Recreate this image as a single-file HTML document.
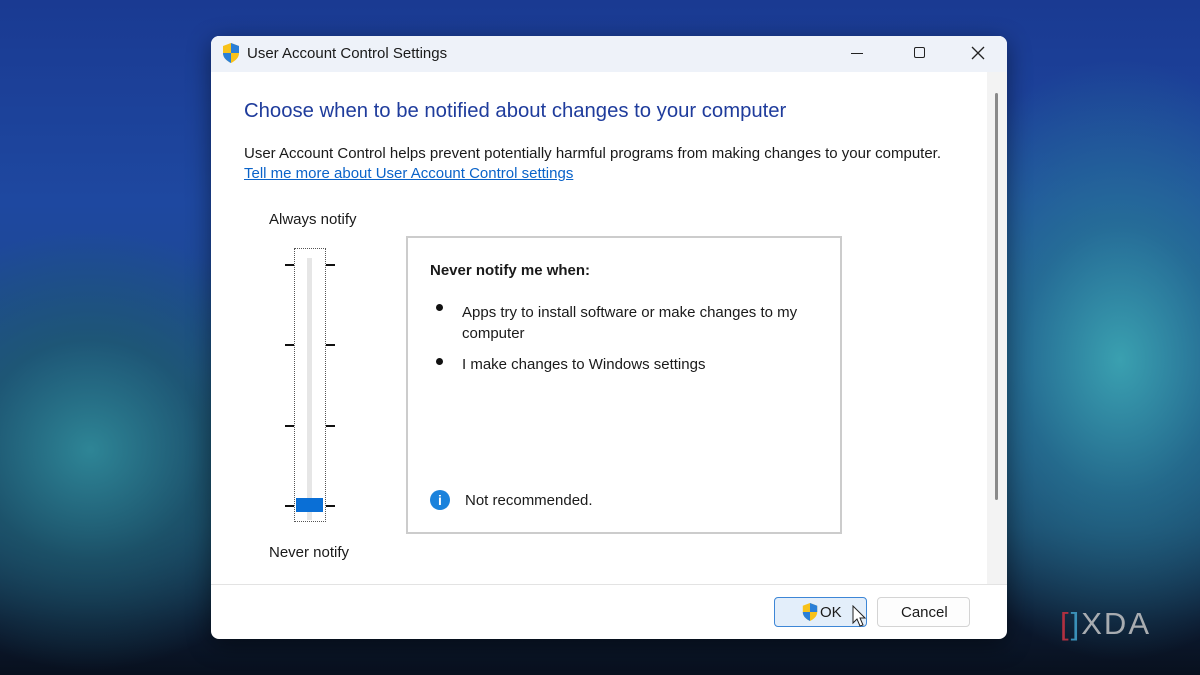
<!DOCTYPE html>
<html><head><meta charset="utf-8"><style>
*{margin:0;padding:0;box-sizing:border-box}
body{width:1200px;height:675px;overflow:hidden;position:relative;font-family:"Liberation Sans",sans-serif;
background:
radial-gradient(ellipse 220px 300px at 1120px 360px,#3aa0b0 0%,rgba(40,120,150,.75) 45%,rgba(0,0,0,0) 100%),
radial-gradient(ellipse 230px 220px at 90px 450px,#2e8596 0%,rgba(30,90,110,.75) 50%,rgba(0,0,0,0) 100%),
linear-gradient(180deg,#1a3a92 0%,#1e48a0 30%,#1d4a8c 55%,#163a5e 78%,#0c1a30 92%,#08101e 100%);}
.a{position:absolute}
.win{left:211px;top:36px;width:796px;height:603px;background:#fff;border-radius:8px;overflow:hidden;box-shadow:0 6px 24px rgba(0,0,0,.45)}
.tb{left:0;top:0;width:796px;height:36px;background:#eef2f9}
.t{font-size:15px;color:#1a1a1a;white-space:nowrap}
</style></head><body>
<div class="a win">
 <div class="a tb"></div>
 <svg class="a" style="left:10px;top:6px" width="20" height="22" viewBox="0 0 20 22"><path d="M10 1 L18 4 V11 C18 16 14 19 10 21 C6 19 2 16 2 11 V4 Z" fill="#f8c21a"/><path d="M10 1 L18 4 V11 H10 Z" fill="#2a7fd8"/><path d="M2 11 H10 V21 C6 19 2 16 2 11Z" fill="#2a7fd8"/></svg>
 <div class="a t" style="left:36px;top:9px">User Account Control Settings</div>
 <div class="a" style="left:640px;top:17px;width:12px;height:1px;background:#222"></div>
 <div class="a" style="left:703px;top:11px;width:11px;height:11px;border:1.5px solid #222;border-radius:2px"></div>
 <svg class="a" style="left:760px;top:10px" width="14" height="14"><path d="M1 1L13 13M13 1L1 13" stroke="#222" stroke-width="1.3"/></svg>
 <div class="a" style="left:776px;top:36px;width:20px;height:512px;background:#f3f3f3"></div>
 <div class="a" style="left:784px;top:57px;width:3px;height:407px;background:#8a8a8a;border-radius:2px"></div>
 <div class="a" style="left:33px;top:64px;font-size:20.3px;color:#1f3c9c;white-space:nowrap">Choose when to be notified about changes to your computer</div>
 <div class="a t" style="left:33px;top:109px">User Account Control helps prevent potentially harmful programs from making changes to your computer.</div>
 <div class="a t" style="left:33px;top:129px;color:#0a63c9;text-decoration:underline">Tell me more about User Account Control settings</div>
 <div class="a t" style="left:58px;top:175px">Always notify</div>
 <div class="a t" style="left:58px;top:508px">Never notify</div>
 <div class="a" style="left:83px;top:212px;width:32px;height:274px;border:1px dotted #555"></div>
 <div class="a" style="left:96px;top:222px;width:5px;height:262px;background:#e6e6e6"></div>
 <div class="a" style="left:74px;top:228px;width:9px;height:2px;background:#111"></div><div class="a" style="left:115px;top:228px;width:9px;height:2px;background:#111"></div>
 <div class="a" style="left:74px;top:308px;width:9px;height:2px;background:#111"></div><div class="a" style="left:115px;top:308px;width:9px;height:2px;background:#111"></div>
 <div class="a" style="left:74px;top:389px;width:9px;height:2px;background:#111"></div><div class="a" style="left:115px;top:389px;width:9px;height:2px;background:#111"></div>
 <div class="a" style="left:74px;top:469px;width:9px;height:2px;background:#111"></div><div class="a" style="left:115px;top:469px;width:9px;height:2px;background:#111"></div>
 <div class="a" style="left:85px;top:462px;width:27px;height:14px;background:#0a6fd6"></div>
 <div class="a" style="left:195px;top:200px;width:436px;height:298px;border:2px solid #cccccc"></div>
 <div class="a t" style="left:219px;top:226px;font-weight:bold">Never notify me when:</div>
 <div class="a" style="left:225px;top:268px;width:7px;height:7px;border-radius:50%;background:#111"></div>
 <div class="a t" style="left:251px;top:266px;line-height:21px">Apps try to install software or make changes to my<br>computer</div>
 <div class="a" style="left:225px;top:322px;width:7px;height:7px;border-radius:50%;background:#111"></div>
 <div class="a t" style="left:251px;top:320px">I make changes to Windows settings</div>
 <div class="a" style="left:219px;top:454px;width:20px;height:20px;border-radius:50%;background:#1a82dc;color:#fff;font-size:14px;text-align:center;line-height:20px;font-weight:bold">i</div>
 <div class="a t" style="left:254px;top:456px">Not recommended.</div>
 <div class="a" style="left:0;top:548px;width:796px;height:1px;background:#e3e3e3"></div>
 <div class="a" style="left:563px;top:561px;width:93px;height:30px;border:1px solid #3d86d6;background:#e3eefa;border-radius:4px"></div>
 <svg class="a" style="left:590px;top:566px" width="18" height="20" viewBox="0 0 20 22"><path d="M10 1 L18 4 V11 C18 16 14 19 10 21 C6 19 2 16 2 11 V4 Z" fill="#f8c21a"/><path d="M10 1 L18 4 V11 H10 Z" fill="#2a7fd8"/><path d="M2 11 H10 V21 C6 19 2 16 2 11Z" fill="#2a7fd8"/></svg>
 <div class="a t" style="left:609px;top:568px">OK</div>
 <svg class="a" style="left:641px;top:569px" width="16" height="24"><path d="M1 1 V18 L5 14 L8 21 L11 20 L8 13 H13 Z" fill="#fff" stroke="#222" stroke-width="1"/></svg>
 <div class="a" style="left:666px;top:561px;width:93px;height:30px;border:1px solid #d4d4d4;background:#fdfdfd;border-radius:4px"></div>
 <div class="a t" style="left:690px;top:568px">Cancel</div>
</div>
<div class="a" style="left:1060px;top:606px;font-size:31px;color:#a8acb0;letter-spacing:2px"><span style="color:#b03040">[</span><span style="color:#3a90b8">]</span>XDA</div>
</body></html>
